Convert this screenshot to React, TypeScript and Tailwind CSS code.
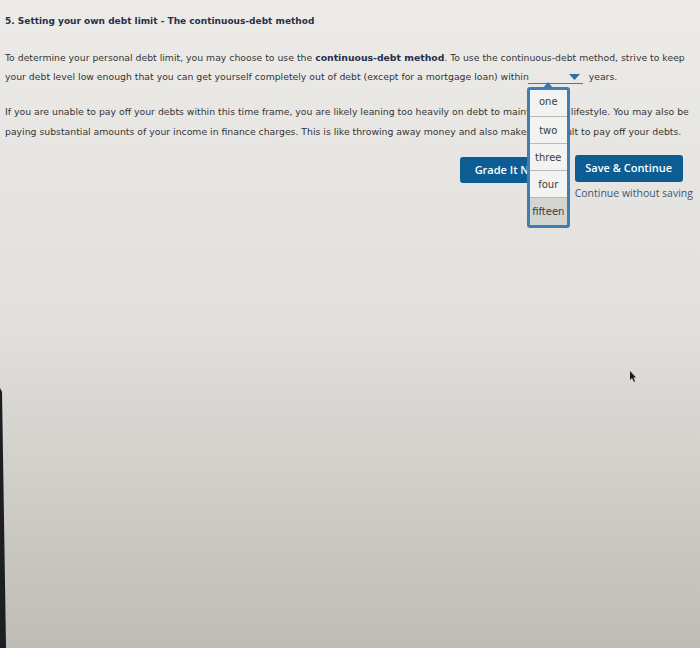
import type React from "react"

const options = ["one", "two", "three", "four", "fifteen"]

const YearsDropdown: React.FC = () => {
  return (
    <span className="relative inline-block align-baseline ml-[-4px]">
      <span className="inline-flex w-[55px] h-[13px] items-end justify-end border-b border-[#4a77a3] pr-[3px] pb-[3px]">
        <svg width="11" height="6" viewBox="0 0 11 6">
          <path d="M0 0 H11 L5.5 6 Z" fill="#2f6fa8" />
        </svg>
      </span>
      {/* open option list */}
      <div className="absolute left-[-1px] top-[20px] w-[43px] z-10">
        <svg className="absolute left-[16px] top-[-6px]" width="10" height="7" viewBox="0 0 10 7">
          <path d="M0 7 L5 1 L10 7 Z" fill="#3a78b0" />
        </svg>
        <ul className="flex flex-col rounded-[3px] border-[3px] border-[#3f7db3] bg-[#f3f3f1] overflow-hidden">
          {options.map((o, i) => (
            <li
              key={o}
              className={`flex h-[27px] items-center justify-center text-[10px] text-[#3b3b3b] ${
                i < options.length - 1 ? "border-b border-[#b9b9b6]" : ""
              } ${o === "fifteen" ? "bg-[#d4d4d1]" : ""} ${o === "one" ? "pb-[4px]" : ""}`}
            >
              {o}
            </li>
          ))}
        </ul>
      </div>
    </span>
  )
}

export default function App() {
  return (
    <div className="relative w-[700px] h-[648px] overflow-hidden bg-gradient-to-b from-[#edebe8] via-[#e2e0dc] to-[#bfbcb6] font-['DejaVu_Sans',Verdana,sans-serif] text-[#343434]">
      <div className="pl-[5px] pt-[15px]">
        {/* Heading */}
        <h2 className="text-[9px] font-bold text-[#26304a] leading-[12px]">
          5. Setting your own debt limit - The continuous-debt method
        </h2>

        {/* Paragraph one */}
        <p className="mt-[21px] text-[9.3px] leading-[19px] whitespace-nowrap">
          To determine your personal debt limit, you may choose to use the{" "}
          <span className="font-bold text-[#26304a]">continuous-debt method</span>. To use the continuous-debt method, strive to keep
          <br />
          your debt level low enough that you can get yourself completely out of debt (except for a mortgage loan) within{" "}
          <YearsDropdown />
          &nbsp;&nbsp;years.
        </p>

        {/* Paragraph two */}
        <p className="mt-[16px] text-[9.3px] leading-[20px] whitespace-nowrap">
          If you are unable to pay off your debts within this time frame, you are likely leaning too heavily on debt to maintain your
          lifestyle. You may also be
          <br />
          paying substantial amounts of your income in finance charges. This is like throwing away money and also makes it difficult
          to pay off your debts.
        </p>

        {/* Actions */}
        <div className="mt-[13px] flex justify-end gap-[15px] pr-[7px] font-['Open_Sans',sans-serif]">
          <button className="mt-[2px] h-[26px] w-[100px] rounded-[3px] bg-[#0d5c93] text-[11px] font-semibold text-white">
            Grade It Now
          </button>
          <div className="flex flex-col items-start gap-[4px]">
            <button className="h-[27px] w-[108px] rounded-[3px] bg-[#0d5c93] text-[11px] font-semibold text-white">
              Save &amp; Continue
            </button>
            <span className="text-[10.5px] text-[#3d5675]">Continue without saving</span>
          </div>
        </div>
      </div>

      {/* monitor bezel edge */}
      <svg className="absolute left-0 top-0" width="10" height="648" viewBox="0 0 10 648">
        <path d="M0 388 L2 392 L6 648 L0 648 Z" fill="#1c1e22" />
      </svg>

      {/* mouse pointer */}
      <svg className="absolute left-[629px] top-[371px]" width="8" height="12" viewBox="0 0 8 12">
        <path d="M1 0 L1 9 L3 7 L5 11 L6 10.5 L4.5 6.5 L7 6.5 Z" fill="#1b1b1b" />
      </svg>
    </div>
  )
}
